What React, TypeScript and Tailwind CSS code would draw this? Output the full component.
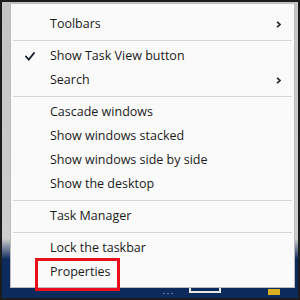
import React from "react";

type Item =
  | { kind: "item"; label: string; check?: boolean; sub?: boolean }
  | { kind: "sep" };

const items: Item[] = [
  { kind: "item", label: "Toolbars", sub: true },
  { kind: "sep" },
  { kind: "item", label: "Show Task View button", check: true },
  { kind: "item", label: "Search", sub: true },
  { kind: "sep" },
  { kind: "item", label: "Cascade windows" },
  { kind: "item", label: "Show windows stacked" },
  { kind: "item", label: "Show windows side by side" },
  { kind: "item", label: "Show the desktop" },
  { kind: "sep" },
  { kind: "item", label: "Task Manager" },
  { kind: "sep" },
  { kind: "item", label: "Lock the taskbar" },
  { kind: "item", label: "Properties" },
];

function Check() {
  return (
    <svg width="10" height="9" viewBox="0 0 10 9" className="block">
      <path d="M1 4.5 L3.8 7.5 L9 1" fill="none" stroke="#1b2230" strokeWidth="1.8" strokeLinecap="square" />
    </svg>
  );
}

function Chevron() {
  return (
    <svg width="5" height="7" viewBox="0 0 5 7" className="block">
      <path d="M1 0.8 L4 3.5 L1 6.2" fill="none" stroke="#222" strokeWidth="1.6" />
    </svg>
  );
}

export default function App() {
  return (
    <div
      className="w-[300px] h-[300px] border-2 border-[#1c1c1c] flex flex-col relative overflow-hidden bg-[linear-gradient(to_bottom,#c4c4c4_0%,#cdcdcd_80%,#0d2a5c_87%,#0d2a5c_100%)]"
      style={{ fontFamily: '"Open Sans", "Noto Sans", sans-serif' }}
    >
      <div className="ml-[8px] mt-[1px] w-[285px] h-[285px] border border-[#bdbdbd] bg-[#fafafa] pt-[8px] flex flex-col shrink-0">
        {items.map((it, i) =>
          it.kind === "sep" ? (
            <div key={i} className="h-[8px] flex items-center px-[2px]">
              <div className="h-px w-full bg-[#d6d6d6]" />
            </div>
          ) : (
            <div key={i} className="h-[24px] flex items-center relative pl-[39px] pr-[13px]">
              {it.check && (
                <div className="absolute left-[14px] top-[8px]">
                  <Check />
                </div>
              )}
              <span className="text-[12.5px] text-[#1a1a1a] leading-none flex-1">{it.label}</span>
              {it.sub && <Chevron />}
            </div>
          )
        )}
      </div>
      <div className="flex items-start h-[10px]">
        <div className="ml-[161px] mt-[5px] flex gap-[2px]">
          <div className="w-[2px] h-[1px] bg-[#5a6e90]" />
          <div className="w-[2px] h-[1px] bg-[#5a6e90]" />
          <div className="w-[2px] h-[1px] bg-[#5a6e90]" />
        </div>
        <div className="ml-[16px] w-[32px] h-[5px] border-x-2 border-b-2 border-[#e8e8e8]" />
        <div className="ml-[47px] mt-[1px] w-[12px] h-[6px] bg-[#d8b020]" />
      </div>
      <div className="absolute left-[33px] top-[256px] w-[85px] h-[33px] border-[3px] border-[#ec0d1c]" />
    </div>
  );
}
